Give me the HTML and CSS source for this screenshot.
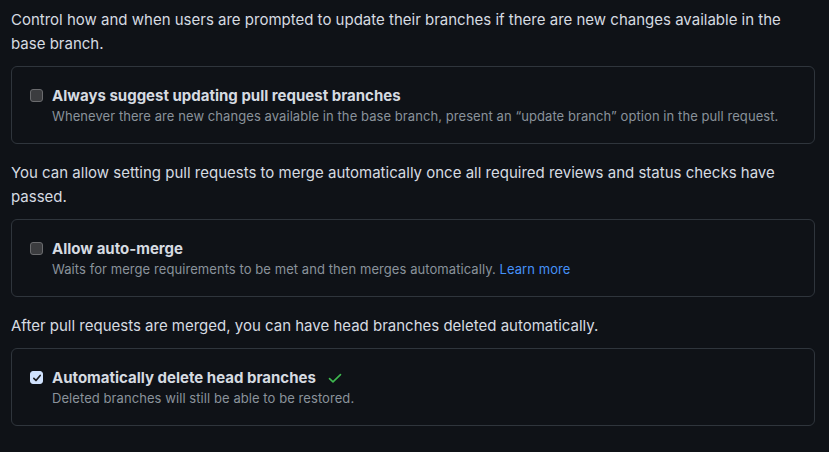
FILE: index.html
```html
<!DOCTYPE html>
<html lang="en">
<head>
<meta charset="utf-8">
<title>Pull request settings</title>
<link rel="stylesheet" href="styles.css">
</head>
<body>
<main class="settings">
  <p class="intro">Control how and when users are prompted to update their branches if there are new changes available in the base branch.</p>
  <div class="box">
    <div class="option">
      <span class="cb"></span>
      <div class="text">
        <div class="title">Always suggest updating pull request branches</div>
        <div class="desc">Whenever there are new changes available in the base branch, present an “update branch” option in the pull request.</div>
      </div>
    </div>
  </div>

  <p class="intro">You can allow setting pull requests to merge automatically once all required reviews and status checks have passed.</p>
  <div class="box">
    <div class="option">
      <span class="cb"></span>
      <div class="text">
        <div class="title">Allow auto-merge</div>
        <div class="desc">Waits for merge requirements to be met and then merges automatically. <a class="link" href="#">Learn more</a></div>
      </div>
    </div>
  </div>

  <p class="intro">After pull requests are merged, you can have head branches deleted automatically.</p>
  <div class="box">
    <div class="option">
      <span class="cb checked">
        <svg viewBox="0 0 12 12" width="10" height="10"><path d="M2.2 6.4 L4.8 9 L9.8 3" fill="none" stroke="#1c1c1e" stroke-width="2" stroke-linecap="round" stroke-linejoin="round"/></svg>
      </span>
      <div class="text">
        <div class="title">Automatically delete head branches
          <svg class="ok" viewBox="0 0 16 16" width="16" height="16"><path d="M2.5 8.6 L6 11.8 L13.5 4.6" fill="none" stroke="#3fb950" stroke-width="1.6" stroke-linecap="round" stroke-linejoin="round"/></svg>
        </div>
        <div class="desc">Deleted branches will still be able to be restored.</div>
      </div>
    </div>
  </div>
</main>
</body>
</html>
```

FILE: styles.css
```css
* { box-sizing: border-box; }
html, body {
  margin: 0;
  background: #0f1217;
}
body {
  font-family: "Inter", "Liberation Sans", sans-serif;
  color: #d6dbe1;
}
.settings {
  padding: 8px 11px 0 11px;
  width: 826px;
}
.intro {
  margin: 0 0 10px 0;
  font-size: 15px;
  line-height: 24px;
  color: #d6dbe1;
}
.box {
  border: 1px solid #2f353c;
  border-radius: 6px;
  padding: 18px 18px 17px 18px;
  margin-bottom: 17px;
}
.option {
  display: flex;
  gap: 9px;
}
.cb {
  flex: none;
  width: 13px;
  height: 13px;
  margin-top: 4px;
  border-radius: 3px;
  background: #3b3c3f;
  border: 1px solid #6a6b6e;
  display: flex;
  align-items: center;
  justify-content: center;
}
.cb.checked {
  background: #d0e2fd;
  border-color: #d0e2fd;
}
.title {
  font-size: 15px;
  line-height: 22px;
  font-weight: 700;
  color: #d6dbe1;
  display: flex;
  align-items: center;
  gap: 11px;
}
.desc {
  font-size: 13px;
  line-height: 19px;
  letter-spacing: 0.07px;
  color: #8a929b;
}
.link {
  color: #4591f7;
  text-decoration: none;
}
.ok { flex: none; }
```
